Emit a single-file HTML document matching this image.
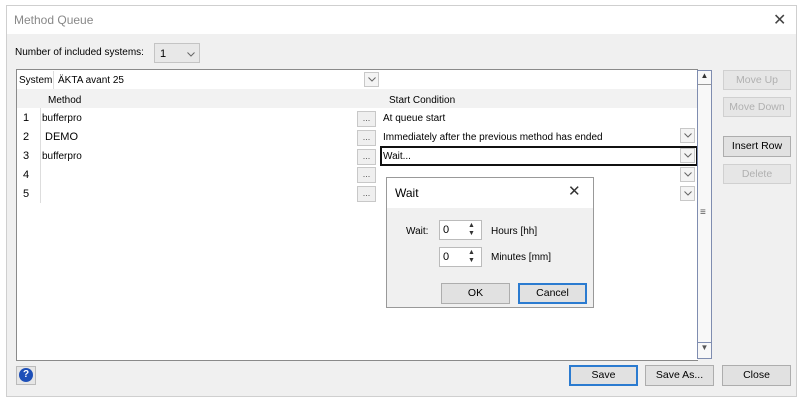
<!DOCTYPE html>
<html><head><style>
*{box-sizing:border-box}
body{margin:0;width:800px;height:402px;background:#fff;font-family:"Liberation Sans",sans-serif;font-size:10px;color:#000;position:relative;overflow:hidden}
.a{position:absolute}
.btn{position:absolute;border:1px solid #adadad;background:#e1e1e1;text-align:center;font-size:10.5px}
.dis{color:#b0b0b0;border-color:#d0d0d0;background:#e6e6e6}
.dd{position:absolute;width:15px;height:15px;border:1px solid #c8c8c8;background:#f4f4f4}
.dd svg,.cv{position:absolute;left:3px;top:4px}
.el{position:absolute;left:357px;width:19px;height:16px;border:1px solid #c8c8c8;background:#efefef;color:#555;font-size:9px;text-align:center;line-height:12px}
.num{position:absolute;left:23px;font-size:11px}
</style></head><body>
<svg width="0" height="0" style="position:absolute"><defs><symbol id="c" viewBox="0 0 8 5"><polyline points="0.5,0.5 4,4 7.5,0.5" fill="none" stroke="#666" stroke-width="1"/></symbol></defs></svg>
<div class="a" style="left:6px;top:5px;width:791px;height:392px;border:1px solid #cfcfcf;background:#f0f0f0"></div>
<div class="a" style="left:7px;top:6px;width:789px;height:28px;background:#fff"></div>
<div class="a" style="left:14px;top:13px;color:#888;font-size:12px">Method Queue</div>
<div class="a" style="left:773px;top:10px;font-size:16px;color:#444">✕</div>
<div class="a" style="left:15px;top:47px">Number of included systems:</div>
<div class="a" style="left:154px;top:43px;width:46px;height:20px;border:1px solid #c4c4c4;background:#e8e8e8;padding:4px 0 0 5px;font-size:11px">1<svg class="cv" style="left:32px;top:8px" width="8" height="5"><use href="#c"/></svg></div>
<div class="a" style="left:16px;top:69px;width:682px;height:292px;border:1px solid #8a8a8a;border-right:none;background:#fff"></div>
<div class="a" style="left:19px;top:75px">System</div>
<div class="a" style="left:53px;top:71px;width:330px;height:18px;border-left:1px solid #ddd"></div>
<div class="a" style="left:58px;top:75px">ÄKTA avant 25</div>
<div class="dd" style="left:364px;top:72px"><svg width="8" height="5"><use href="#c"/></svg></div>
<div class="a" style="left:17px;top:89px;width:680px;height:19px;background:#f2f2f2"></div>
<div class="a" style="left:48px;top:95px">Method</div>
<div class="a" style="left:389px;top:95px">Start Condition</div>
<div class="a" style="left:40px;top:108px;width:1px;height:95px;background:#ddd"></div>
<div class="num" style="top:112px">1</div><div class="a" style="left:42px;top:113px">bufferpro</div>
<div class="num" style="top:131px">2</div><div class="a" style="left:45px;top:131px;font-size:11px">DEMO</div>
<div class="num" style="top:150px">3</div><div class="a" style="left:42px;top:151px">bufferpro</div>
<div class="num" style="top:169px">4</div>
<div class="num" style="top:188px">5</div>
<div class="el" style="top:111px">...</div><div class="el" style="top:130px">...</div><div class="el" style="top:149px">...</div><div class="el" style="top:167px">...</div><div class="el" style="top:186px">...</div>
<div class="a" style="left:383px;top:113px">At queue start</div>
<div class="a" style="left:383px;top:132px">Immediately after the previous method has ended</div>
<div class="dd" style="left:680px;top:128px"><svg width="8" height="5"><use href="#c"/></svg></div>
<div class="a" style="left:380px;top:146px;width:318px;height:20px;border:2px solid #111"></div>
<div class="a" style="left:383px;top:151px">Wait...</div>
<div class="dd" style="left:680px;top:148px"><svg width="8" height="5"><use href="#c"/></svg></div>
<div class="dd" style="left:680px;top:167px"><svg width="8" height="5"><use href="#c"/></svg></div>
<div class="dd" style="left:680px;top:186px"><svg width="8" height="5"><use href="#c"/></svg></div>
<div class="a" style="left:697px;top:70px;width:15px;height:289px;border:1px solid #7f8db0;background:#f8f8f8"></div>
<div class="a" style="left:698px;top:71px;width:13px;height:14px;border-bottom:1px solid #999;font-size:8px;text-align:center;color:#333">▲</div>
<div class="a" style="left:698px;top:342px;width:13px;height:16px;border-top:1px solid #7f8db0;font-size:8px;text-align:center;color:#555">▼</div>
<div class="a" style="left:700px;top:207px;font-size:10px;color:#555">≡</div>
<div class="btn dis" style="left:723px;top:70px;width:68px;height:20px;line-height:18px">Move Up</div>
<div class="btn dis" style="left:723px;top:97px;width:68px;height:20px;line-height:18px">Move Down</div>
<div class="btn" style="left:723px;top:136px;width:68px;height:21px;line-height:19px">Insert Row</div>
<div class="btn dis" style="left:723px;top:164px;width:68px;height:20px;line-height:18px">Delete</div>
<div class="a" style="left:386px;top:177px;width:208px;height:131px;border:1px solid #999;background:#f0f0f0"></div>
<div class="a" style="left:387px;top:178px;width:206px;height:30px;background:#fff"></div>
<div class="a" style="left:395px;top:186px;font-size:12px">Wait</div>
<div class="a" style="left:568px;top:182px;font-size:15px;color:#333">✕</div>
<div class="a" style="left:406px;top:226px">Wait:</div>
<div class="a" style="left:439px;top:220px;width:43px;height:20px;border:1px solid #bbb;background:#fff;padding:3px 3px;font-size:11px">0</div>
<div class="a" style="left:468px;top:222px;font-size:7px;line-height:8px;color:#333">▲<br>▼</div>
<div class="a" style="left:491px;top:226px">Hours [hh]</div>
<div class="a" style="left:439px;top:247px;width:43px;height:20px;border:1px solid #bbb;background:#fff;padding:3px 3px;font-size:11px">0</div>
<div class="a" style="left:468px;top:249px;font-size:7px;line-height:8px;color:#333">▲<br>▼</div>
<div class="a" style="left:491px;top:252px">Minutes [mm]</div>
<div class="btn" style="left:441px;top:283px;width:69px;height:21px;line-height:19px">OK</div>
<div class="btn" style="left:518px;top:283px;width:69px;height:21px;line-height:17px;border:2px solid #2b7bd0">Cancel</div>
<div class="a" style="left:16px;top:366px;width:20px;height:19px;border:1px solid #bbb;background:#e6e6e6"></div>
<div class="a" style="left:19px;top:368px;width:14px;height:14px;border-radius:50%;background:#1d4fb8;color:#fff;font-size:10px;font-weight:bold;text-align:center;line-height:14px">?</div>
<div class="btn" style="left:569px;top:365px;width:69px;height:21px;line-height:17px;border:2px solid #2b7bd0">Save</div>
<div class="btn" style="left:645px;top:365px;width:69px;height:21px;line-height:19px">Save As...</div>
<div class="btn" style="left:722px;top:365px;width:69px;height:21px;line-height:19px">Close</div>
</body></html>
